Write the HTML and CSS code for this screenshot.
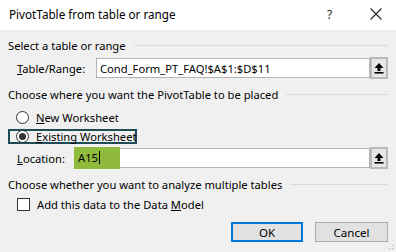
FILE: index.html
```html
<!DOCTYPE html>
<html>
<head>
<meta charset="utf-8">
<link rel="stylesheet" href="styles.css">
</head>
<body>
<div class="dialog">
  <div class="titlebar">
    <span class="title">PivotTable from table or range</span>
    <span class="help">?</span>
    <span class="close">
      <svg width="12" height="12" viewBox="0 0 12 12"><path d="M0.5 0.5 L11.5 11.5 M11.5 0.5 L0.5 11.5" stroke="#222" stroke-width="1.1" fill="none"/></svg>
    </span>
  </div>
  <div class="content">
    <div class="section s1"><span>Select a table or range</span><span class="rule"></span></div>
    <div class="field f1">
      <span class="label lbl-range"><u>T</u>able/Range:</span>
      <div class="input"><span class="val">Cond_Form_PT_FAQ!$A$1:$D$11</span></div>
      <div class="pick">
        <svg width="10" height="11" viewBox="0 0 10 11"><path d="M5 0 L9.5 5 L6.5 5 L6.5 8 L3.5 8 L3.5 5 L0.5 5 Z" fill="#000"/><rect x="0.5" y="9" width="9" height="1.6" fill="#000"/></svg>
      </div>
    </div>
    <div class="section s2"><span>Choose where you want the PivotTable to be placed</span><span class="rule"></span></div>
    <div class="option o1"><span class="radio"></span><span><u>N</u>ew Worksheet</span></div>
    <div class="option o2 focus"><span class="radio checked"></span><span><u>E</u>xisting Worksheet</span></div>
    <div class="field f2">
      <span class="label lbl-loc"><u>L</u>ocation:</span>
      <div class="input"><span class="hl">A15<span class="caret"></span></span></div>
      <div class="pick">
        <svg width="10" height="11" viewBox="0 0 10 11"><path d="M5 0 L9.5 5 L6.5 5 L6.5 8 L3.5 8 L3.5 5 L0.5 5 Z" fill="#000"/><rect x="0.5" y="9" width="9" height="1.6" fill="#000"/></svg>
      </div>
    </div>
    <div class="section s3"><span>Choose whether you want to analyze multiple tables</span><span class="rule"></span></div>
    <div class="option o3"><span class="check"></span><span>Add this data to the Data <u>M</u>odel</span></div>
    <div class="buttons">
      <button class="btn ok">OK</button>
      <button class="btn cancel">Cancel</button>
    </div>
  </div>
  <div class="grip"></div>
</div>
</body>
</html>
```

FILE: styles.css
```css
* { box-sizing: border-box; }
html, body { margin: 0; padding: 0; }
body {
  width: 396px;
  height: 252px;
  overflow: hidden;
  font-family: "Noto Sans", "Open Sans", sans-serif;
  font-size: 11.2px;
  color: #000;
  background: #f0f0f0;
}
.dialog {
  position: relative;
  width: 396px;
  height: 252px;
  background: #f0f0f0;
}
.titlebar {
  height: 30px;
  background: #fff;
  display: flex;
  align-items: center;
  padding-left: 9px;
  font-size: 11.7px;
  white-space: nowrap;
}
.title { flex: 1; padding-bottom: 2px; }
.help { width: 12px; margin-right: 31px; font-size: 12px; color: #222; padding-bottom: 2px; }
.close { width: 12px; margin-right: 14px; display: flex; padding-bottom: 2px; }
.content {
  padding: 0 8px;
  white-space: nowrap;
}
.section {
  display: flex;
  align-items: center;
  height: 16px;
}
.section .rule {
  flex: 1;
  height: 0;
  border-top: 1px solid #dadada;
  margin-left: 8px;
}
.s1 { margin-top: 7px; }
.s2 { margin-top: 7px; }
.s3 { margin-top: 7px; }
.field {
  display: flex;
  align-items: center;
  height: 22px;
}
.f1 { margin-top: 4px; }
.f2 { margin-top: 3px; }
.label { padding-left: 9px; }
.lbl-range { width: 88px; }
.lbl-loc { width: 66px; }
.input {
  flex: 1;
  height: 20px;
  background: #fff;
  border: 1px solid #b4b4b4;
  display: flex;
  align-items: center;
}
.val { padding-left: 3px; }
.hl {
  background: #8fba3c;
  height: 22px;
  margin: -1px 0 0 -1px;
  width: 46px;
  display: flex;
  align-items: center;
  padding-left: 4px;
}
.caret {
  display: inline-block;
  width: 1px;
  height: 13px;
  background: #000;
  margin-left: 1px;
}
.pick {
  width: 18px;
  height: 22px;
  background: #e6e6e6;
  border: 2px solid #b9b9b9;
  display: flex;
  align-items: center;
  justify-content: center;
}
.option {
  display: flex;
  align-items: center;
  height: 14px;
  gap: 7px;
}
.o1 { margin-top: 8px; padding-left: 8px; }
.o2 { margin-top: 5px; }
.focus {
  height: 15px;
  width: 129px;
  border: 2px solid #1e4c57;
  padding-left: 6px;
}
.radio {
  flex: none;
  width: 13px;
  height: 13px;
  border-radius: 50%;
  border: 1px solid #333;
  background: #fff;
  display: flex;
  align-items: center;
  justify-content: center;
}
.radio.checked::after {
  content: "";
  width: 7px;
  height: 7px;
  border-radius: 50%;
  background: #333;
}
.o3 { margin-top: 5px; padding-left: 9px; }
.check {
  flex: none;
  width: 13px;
  height: 13px;
  border: 1px solid #333;
  background: #fff;
}
.buttons {
  display: flex;
  justify-content: flex-end;
  gap: 12px;
  margin-top: 11px;
}
.btn {
  font-family: inherit;
  font-size: 11.5px;
  height: 20px;
  background: #e1e1e1;
  border: 1px solid #adadad;
  padding: 0;
  color: #000;
}
.ok { width: 72px; border: 2px solid #0078d7; }
.cancel { width: 73px; }
.grip {
  position: absolute;
  right: 1px;
  bottom: 1px;
  width: 10px;
  height: 10px;
  background-image: radial-gradient(circle, #b0b0b0 0.8px, transparent 1px);
  background-size: 3px 3px;
  clip-path: polygon(100% 0, 100% 100%, 0 100%);
}
```
